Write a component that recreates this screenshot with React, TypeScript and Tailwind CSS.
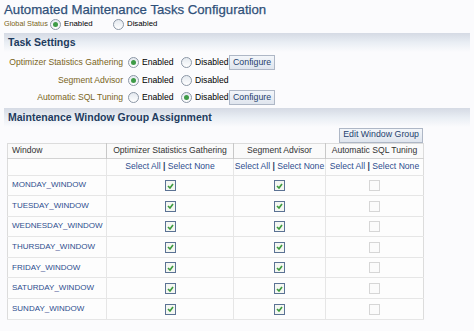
import React from 'react';

const windows = [
  'MONDAY_WINDOW',
  'TUESDAY_WINDOW',
  'WEDNESDAY_WINDOW',
  'THURSDAY_WINDOW',
  'FRIDAY_WINDOW',
  'SATURDAY_WINDOW',
  'SUNDAY_WINDOW',
];

const Radio = ({ checked, label }: { checked?: boolean; label: string }) => (
  <span className="flex items-center gap-[3px]">
    <span className="flex h-[11px] w-[11px] shrink-0 items-center justify-center rounded-full border border-[#8c97a6] bg-linear-to-b from-[#e4e9ef] to-white">
      {checked && <span className="h-[5px] w-[5px] rounded-full bg-[#3f9b47]" />}
    </span>
    <span className="leading-none whitespace-nowrap">{label}</span>
  </span>
);

const Button = ({ children }: { children: React.ReactNode }) => (
  <span className="inline-flex h-[15px] items-center border border-[#aeb7c6] bg-linear-to-b from-[#f3f6fa] to-[#dfe5ee] px-[3px] text-[8.8px] text-[#1f3f6d]">
    {children}
  </span>
);

const SectionBar = ({ title }: { title: string }) => (
  <div className="mx-[4px] flex h-[19px] items-center bg-linear-to-b from-[#d5dae4] via-[#e9eef4] to-[#fbfbfd] pl-[4px] pt-[1px] text-[10.5px] font-bold text-[#1e3b5e]">
    {title}
  </div>
);

const Check = ({ on }: { on: boolean }) =>
  on ? (
    <span className="inline-flex h-[11px] w-[11px] items-center justify-center border border-[#5b7294] bg-[#f4f7f2]">
      <svg width="7" height="6" viewBox="0 0 7 6">
        <path d="M1 3 L3 5 L6 1" stroke="#3c9a3c" strokeWidth="1.6" fill="none" />
      </svg>
    </span>
  ) : (
    <span className="inline-block h-[11px] w-[11px] border border-[#d6d6d6] bg-[#fbfbfb]" />
  );

const SelectLinks = () => (
  <span className="text-[#2d4d8e]">
    Select All <span className="font-bold text-[#2d3d5e]">|</span> Select None
  </span>
);

export default function App() {
  const tasks = [
    { label: 'Optimizer Statistics Gathering', enabled: true, configure: true },
    { label: 'Segment Advisor', enabled: true, configure: false },
    { label: 'Automatic SQL Tuning', enabled: false, configure: true },
  ];

  return (
    <div className="h-[331px] w-[474px] overflow-hidden bg-[#fbfbfd] pt-[1px] font-['Liberation_Sans',Arial,sans-serif] text-[8.6px]">
      {/* Title */}
      <div className="h-[17px] pl-[4px] text-[13.2px] leading-[18px] text-[#2f5079] [-webkit-text-stroke:0.25px_#2f5079]">
        Automated Maintenance Tasks Configuration
      </div>
      <div className="flex h-[12px] items-center pl-[4px] text-[7.8px]">
        <span className="w-[46px] shrink-0 whitespace-nowrap text-[7.3px] text-[#7a6421]">Global Status</span>
        <span className="w-[63px] shrink-0">
          <Radio checked label="Enabled" />
        </span>
        <Radio label="Disabled" />
      </div>

      <div className="mt-[3px]">
        <SectionBar title="Task Settings" />
      </div>

      {/* Task rows */}
      <div className="pt-[2px]">
        {tasks.map((t) => (
          <div key={t.label} className="flex h-[17.5px] items-center">
            <span className="w-[128px] shrink-0 whitespace-nowrap pr-[5px] text-right text-[#7a6421]">{t.label}</span>
            <span className="w-[53px] shrink-0">
              <Radio checked={t.enabled} label="Enabled" />
            </span>
            <span className="w-[48px] shrink-0">
              <Radio checked={!t.enabled} label="Disabled" />
            </span>
            {t.configure && <Button>Configure</Button>}
          </div>
        ))}
      </div>

      <div className="mt-[1px]">
        <SectionBar title="Maintenance Window Group Assignment" />
      </div>

      <div className="flex w-[423px] justify-end pt-[1px]">
        <Button>Edit Window Group</Button>
      </div>

      {/* Table */}
      <table className="ml-[7px] w-[416px] table-fixed border-collapse border border-[#dcdcdc] bg-[#fdfdfd]">
        <colgroup>
          <col className="w-[99px]" />
          <col className="w-[127px]" />
          <col className="w-[92px]" />
          <col className="w-[98px]" />
        </colgroup>
        <thead>
          <tr className="h-[15px] border-b border-[#d2d2d2] bg-[#fafafa] text-[#333]">
            <th className="border-r border-[#c8c8c8] pl-[4px] text-left font-normal">Window</th>
            <th className="border-r border-[#c8c8c8] font-normal">Optimizer Statistics Gathering</th>
            <th className="border-r border-[#c8c8c8] font-normal">Segment Advisor</th>
            <th className="font-normal">Automatic SQL Tuning</th>
          </tr>
        </thead>
        <tbody>
          <tr className="h-[17px] border-b border-[#e6e6e6]">
            <td className="border-r border-[#e6e6e6]" />
            <td className="border-r border-[#e6e6e6] text-center">
              <SelectLinks />
            </td>
            <td className="border-r border-[#e6e6e6] text-center">
              <SelectLinks />
            </td>
            <td className="text-center">
              <SelectLinks />
            </td>
          </tr>
          {windows.map((w) => (
            <tr key={w} className="h-[20.6px] border-b border-[#e6e6e6]">
              <td className="border-r border-[#e6e6e6] pl-[4px] text-[8px] text-[#2d4d8e]">{w}</td>
              <td className="border-r border-[#e6e6e6] text-center align-middle">
                <span className="inline-flex align-middle">
                  <Check on />
                </span>
              </td>
              <td className="border-r border-[#e6e6e6] text-center align-middle">
                <span className="inline-flex align-middle">
                  <Check on />
                </span>
              </td>
              <td className="text-center align-middle">
                <span className="inline-flex align-middle">
                  <Check on={false} />
                </span>
              </td>
            </tr>
          ))}
        </tbody>
      </table>
    </div>
  );
}
